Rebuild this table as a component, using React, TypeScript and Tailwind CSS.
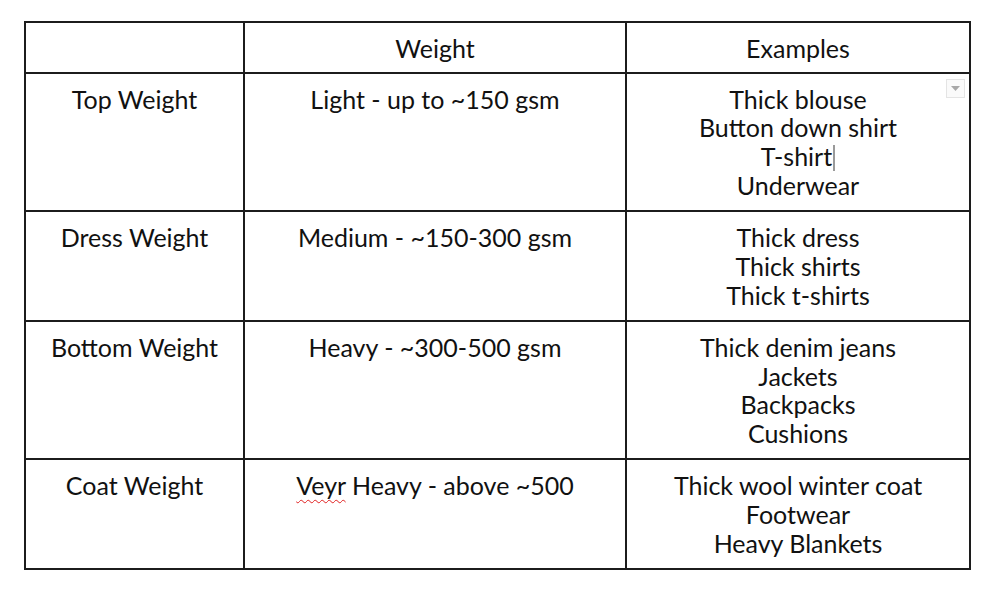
const rows = [
  { name: "Top Weight", weight: "Light - up to ~150 gsm", examples: ["Thick blouse", "Button down shirt", "T-shirt", "Underwear"] },
  { name: "Dress Weight", weight: "Medium - ~150-300 gsm", examples: ["Thick dress", "Thick shirts", "Thick t-shirts"] },
  { name: "Bottom Weight", weight: "Heavy - ~300-500 gsm", examples: ["Thick denim jeans", "Jackets", "Backpacks", "Cushions"] },
  { name: "Coat Weight", weight: "Veyr Heavy - above ~500", examples: ["Thick wool winter coat", "Footwear", "Heavy Blankets"] },
];

const head = "border-2 border-[#1c1c1c] align-top text-center pt-[11px] pb-[9px] px-2 font-normal";
const cell = "border-2 border-[#1c1c1c] align-top text-center pt-[11px] pb-[10.5px] px-2";

export default function App() {
  return (
    <div className="w-[1000px] h-[600px] bg-white pl-[24px] pt-[21px] text-[#111] text-[25px] leading-[28.7px]" style={{ fontFamily: "Lato, 'Open Sans', sans-serif" }}>
      <table className="border-collapse table-fixed w-[945px]">
        <colgroup>
          <col className="w-[219px]" />
          <col className="w-[382px]" />
          <col className="w-[344px]" />
        </colgroup>
        <thead>
          <tr>
            <th className={head}></th>
            <th className={head}>Weight</th>
            <th className={head}>Examples</th>
          </tr>
        </thead>
        <tbody>
          {rows.map((r, i) => (
            <tr key={r.name}>
              <td className={cell}>{r.name}</td>
              <td className={cell}>
                {i === 3 ? (
                  <>
                    <span className="underline decoration-wavy decoration-[#e02020] decoration-1 underline-offset-4">Veyr</span> Heavy - above ~500
                  </>
                ) : (
                  r.weight
                )}
              </td>
              <td className={cell + " relative"}>
                {i === 0 && (
                  <div className="absolute right-[4px] top-[5px] w-[19px] h-[19px] border border-[#e4e4e4] bg-[#fafafa] flex items-center justify-center">
                    <svg width="9" height="5" viewBox="0 0 9 5"><path d="M0 0h9L4.5 5z" fill="#a8a8a8" /></svg>
                  </div>
                )}
                {r.examples.map((e) => (
                  <div key={e}>
                    {e}
                    {e === "T-shirt" && <span className="inline-block w-[2px] h-[26px] bg-[#9a9a9a] align-[-5px] ml-[1px]" />}
                  </div>
                ))}
              </td>
            </tr>
          ))}
        </tbody>
      </table>
    </div>
  );
}
